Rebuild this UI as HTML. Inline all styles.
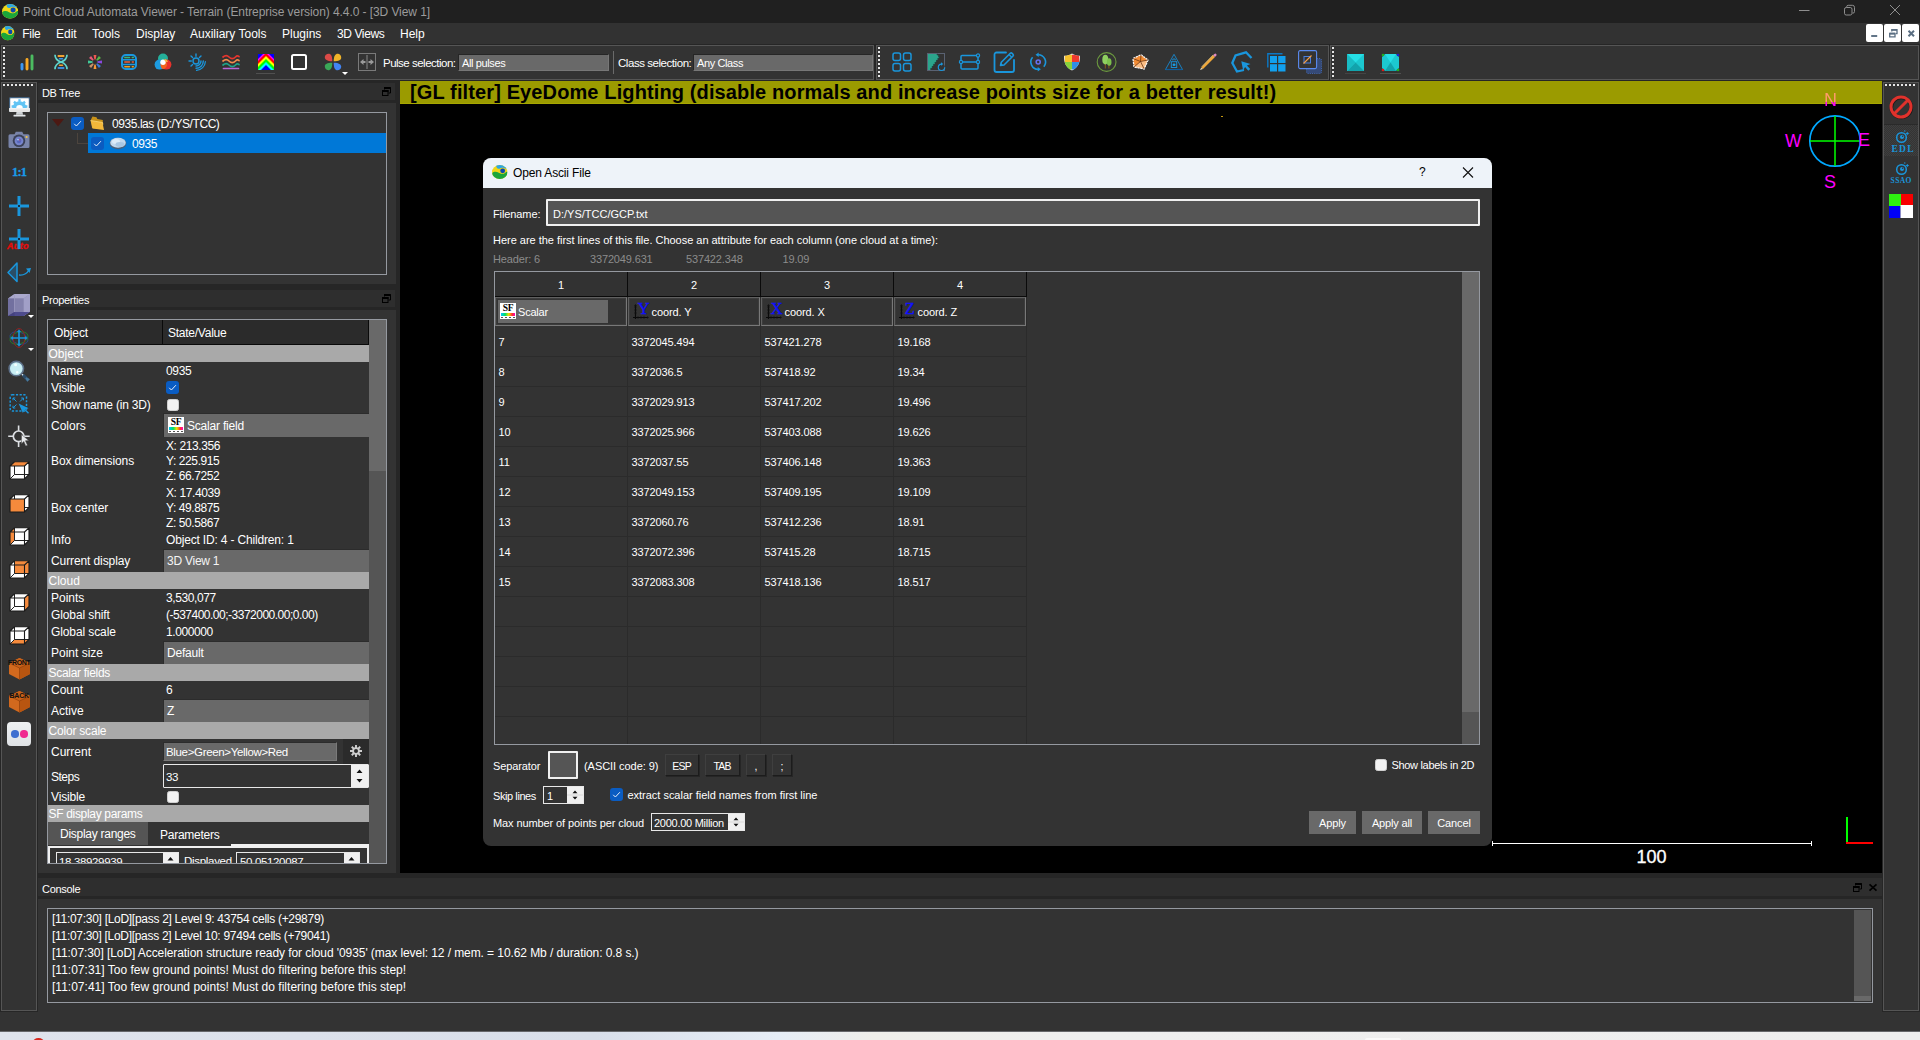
<!DOCTYPE html>
<html><head><meta charset="utf-8"><title>Point Cloud Automata Viewer</title>
<style>
*{box-sizing:border-box;margin:0;padding:0}
html,body{width:1920px;height:1040px;overflow:hidden}
body{background:#333;font-family:"Liberation Sans",sans-serif;font-size:12px;color:#fff;position:relative}
.a{position:absolute}
.t{position:absolute;white-space:pre;line-height:14px;height:14px;font-size:12px;color:#fff}
.d{position:absolute;white-space:pre;line-height:13px;height:13px;font-size:11px;color:#fff}
svg{position:absolute;overflow:visible}
.cb{position:absolute;width:13px;height:13px;border-radius:3px;background:#0a5cc2}
.cb svg{left:0;top:0}
.cbw{position:absolute;width:12px;height:12px;border-radius:2.5px;background:#f3f3f3;border:1px solid #d0d0d0}
.sec{position:absolute;left:48px;width:321px;height:17px;background:#a9a9a9}
.sec span{position:absolute;left:0.5px;top:1.5px;font-size:12px;line-height:14px;color:#fff}
.combo{position:absolute;background:#696969;border-top:1px solid #2c2c2c;border-left:1px solid #2c2c2c}
</style></head><body>
<!-- title bar -->
<div class="a" style="left:0;top:0;width:1920px;height:23px;background:#202020"></div>
<div class="t" style="left:23px;top:5px;color:#9b9b9b;letter-spacing:-0.075px">Point Cloud Automata Viewer - Terrain (Entreprise version) 4.4.0 - [3D View 1]</div>
<svg style="left:1798px;top:0px" width="110" height="22" viewBox="0 0 110 22"><g stroke="#8e8e8e" stroke-width="1" fill="none"><path d="M1 10.500h10.500"/><rect x="46.500" y="7.500" width="7.500" height="7.500" rx="1.700"/><path d="M48.700 7v-.2a1.500 1.500 0 0 1 1.500-1.500h4.200a2.100 2.100 0 0 1 2.100 2.100v4.200a1.500 1.500 0 0 1-1.500 1.500h-.5"/><path d="M92 5l10 10M102 5l-10 10"/></g></svg>
<!-- menu bar -->
<div class="a" style="left:0;top:23px;width:1920px;height:22px;background:#323232"></div>
<div class="t" style="left:22.300px;top:27px;letter-spacing:-0.300px">File</div>
<div class="t" style="left:56px;top:27px">Edit</div>
<div class="t" style="left:92px;top:27px">Tools</div>
<div class="t" style="left:136px;top:27px">Display</div>
<div class="t" style="left:190px;top:27px">Auxiliary Tools</div>
<div class="t" style="left:282px;top:27px">Plugins</div>
<div class="t" style="left:337px;top:27px;letter-spacing:-0.400px">3D Views</div>
<div class="t" style="left:400px;top:27px">Help</div>
<!-- mdi buttons -->
<div class="a" style="left:1866px;top:24px;width:17px;height:18px;background:#fff;border-radius:2px"></div>
<div class="a" style="left:1884px;top:24px;width:17px;height:18px;background:#fff;border-radius:2px"></div>
<div class="a" style="left:1902px;top:24px;width:17px;height:18px;background:#fff;border-radius:2px"></div>
<svg style="left:1866px;top:24px" width="54" height="18" viewBox="0 0 54 18"><g stroke="#5a6e82" fill="none"><path d="M5.200 12h6" stroke-width="1.900"/><path d="M23.700 9.300h5.300v3.600h-5.300z" stroke-width="1.300"/><path d="M23.700 9.700h5.300" stroke-width="1.900"/><path d="M25.800 7.500v-1.800h5.200v4h-1.200" stroke-width="1.300"/><path d="M25.800 6h5.200" stroke-width="1.600"/><path d="M42.500 6.800l5.500 5.500M48 6.800l-5.500 5.500" stroke-width="2"/></g></svg>
<!-- toolbar -->
<div class="a" style="left:0;top:44px;width:1920px;height:37px;background:#262626"></div>
<div class="a" style="left:1px;top:45px;width:873px;height:35px;border:1px solid #555;background:#333"></div>
<div class="a" style="left:876px;top:45px;width:453px;height:35px;border:1px solid #555;background:#333"></div>
<div class="a" style="left:1330px;top:45px;width:589px;height:35px;border:1px solid #555;background:#333"></div>
<!-- left toolbar -->
<div class="a" style="left:1px;top:82px;width:36px;height:929px;border:1px solid #555;background:#333;box-shadow:0 0 0 1px #262626"></div>
<!-- right toolbar -->
<div class="a" style="left:1883px;top:82px;width:36px;height:929px;border:1px solid #555;background:#333;box-shadow:0 0 0 1px #262626"></div>
<!-- DB tree dock -->
<div class="a" style="left:38px;top:81px;width:362px;height:22px;background:#262626"></div>
<div class="a" style="left:38px;top:83px;width:357px;height:17px;background:#2e2e2e"></div>
<div class="t" style="left:42px;top:86px;font-size:11px;letter-spacing:-0.350px">DB Tree</div>
<div class="a" style="left:47px;top:112px;width:340px;height:163px;border:1px solid #9599a0"></div>
<!-- Properties dock -->
<div class="a" style="left:38px;top:284px;width:358px;height:26px;background:#262626"></div>
<div class="a" style="left:38px;top:290px;width:357px;height:17px;background:#2e2e2e"></div>
<div class="t" style="left:42px;top:293px;font-size:11px;letter-spacing:-0.300px">Properties</div>
<div class="a" style="left:47px;top:319px;width:340px;height:545px;border:1px solid #9599a0"></div>
<!-- dock separators -->
<div class="a" style="left:396px;top:81px;width:4px;height:792px;background:#262626"></div>
<div class="a" style="left:38px;top:873px;width:1845px;height:26px;background:#262626"></div>
<!-- 3D view -->
<div class="a" style="left:400px;top:81px;width:1482px;height:792px;background:#000"></div>
<div class="a" style="left:400px;top:81px;width:1482px;height:23px;background:#9b9b00;border-bottom:1px solid #a7a700"></div>
<div class="a" style="left:410px;top:80.500px;font-size:20px;line-height:22px;font-weight:700;color:#000;white-space:pre;letter-spacing:0.12px">[GL filter] EyeDome Lighting (disable normals and increase points size for a better result!)</div>
<!-- console dock -->
<div class="a" style="left:38px;top:878px;width:1844px;height:18px;background:#2e2e2e"></div>
<div class="t" style="left:42px;top:882px;font-size:11px;letter-spacing:-0.300px">Console</div>
<div class="a" style="left:47px;top:908px;width:1826px;height:95px;border:1px solid #9599a0"></div>
<!-- bottom strip -->
<div class="a" style="left:0;top:1031px;width:1920px;height:1px;background:#66676a"></div>
<div class="a" style="left:0;top:1032px;width:1920px;height:8px;background:linear-gradient(90deg,#dfe3ec 0,#d9dfea 31%,#e6edf6 40.500%,#efeeea 45.500%,#efefef 57%,#eeeeee 100%)"></div>
<div class="a" style="left:33px;top:1037.500px;width:10.500px;height:8px;border-radius:50%;background:#d8281e"></div>
<div class="a" style="left:1365px;top:1038px;width:36px;height:4px;border-radius:3px;background:#fafafa"></div>
<svg style="left:2px;top:3.7px" width="16.2" height="14.8" viewBox="0 0 16 15" preserveAspectRatio="none"><clipPath id="appc1"><ellipse cx="8" cy="7.500" rx="8" ry="7.400"/></clipPath><g clip-path="url(#appc1)"><rect width="16" height="15" fill="#efd718"/><path d="M4.300 0C4.500 3 5.500 4.400 7.500 4S10 2.700 12 3.100S14.500 4.200 16 3.600V0z" fill="#2ba6e6"/><path d="M0 8.600C2 6.600 4.500 6.600 7 8.300S11.500 9.400 13 8.400S15 7.100 16 7.100V15H0z" fill="#1ba63a"/><circle cx="11" cy="6.100" r="3.200" fill="#e4cc20"/><circle cx="11" cy="6.100" r="2.500" fill="#0a48ae"/></g></svg>
<svg style="left:0.6px;top:25.8px" width="13.5" height="14.5" viewBox="0 0 16 15" preserveAspectRatio="none"><clipPath id="appc2"><ellipse cx="8" cy="7.500" rx="8" ry="7.400"/></clipPath><g clip-path="url(#appc2)"><rect width="16" height="15" fill="#efd718"/><path d="M4.300 0C4.500 3 5.500 4.400 7.500 4S10 2.700 12 3.100S14.500 4.200 16 3.600V0z" fill="#2ba6e6"/><path d="M0 8.600C2 6.600 4.500 6.600 7 8.300S11.500 9.400 13 8.400S15 7.100 16 7.100V15H0z" fill="#1ba63a"/><circle cx="11" cy="6.100" r="3.200" fill="#e4cc20"/><circle cx="11" cy="6.100" r="2.500" fill="#0a48ae"/></g></svg>
<!-- toolbar handles -->
<svg style="left:3px;top:47px" width="2" height="32"><g fill="#e6e6e6"><rect y="0" width="2" height="2"/><rect y="4" width="2" height="2"/><rect y="8" width="2" height="2"/><rect y="12" width="2" height="2"/><rect y="16" width="2" height="2"/><rect y="20" width="2" height="2"/><rect y="24" width="2" height="2"/><rect y="28" width="2" height="2"/></g></svg>
<svg style="left:878px;top:47px" width="2" height="32"><g fill="#e6e6e6"><rect y="0" width="2" height="2"/><rect y="4" width="2" height="2"/><rect y="8" width="2" height="2"/><rect y="12" width="2" height="2"/><rect y="16" width="2" height="2"/><rect y="20" width="2" height="2"/><rect y="24" width="2" height="2"/><rect y="28" width="2" height="2"/></g></svg>
<svg style="left:1332px;top:47px" width="2" height="32"><g fill="#e6e6e6"><rect y="0" width="2" height="2"/><rect y="4" width="2" height="2"/><rect y="8" width="2" height="2"/><rect y="12" width="2" height="2"/><rect y="16" width="2" height="2"/><rect y="20" width="2" height="2"/><rect y="24" width="2" height="2"/><rect y="28" width="2" height="2"/></g></svg>
<!-- T1: bar chart -->
<svg style="left:19px;top:53px" width="16" height="18" viewBox="0 0 16 18"><g stroke-linecap="round" stroke-width="2.900" fill="none"><path d="M3 11.500v4.500" stroke="#3b97f3"/><path d="M8 6.500v9.500" stroke="#f7a823"/><path d="M13 3v13" stroke="#4cbc61"/></g></svg>
<!-- T1: dna -->
<svg style="left:53px;top:54px" width="16" height="16" viewBox="0 0 16 16"><g fill="none" stroke-linecap="butt"><path d="M2 .8C2 5 4.500 6.800 8 8S14 11 14 15.200" stroke="#5fd6ce" stroke-width="1.700"/><path d="M14 .8C14 5 11.500 6.800 8 8S2 11 2 15.200" stroke="#5fd6ce" stroke-width="1.700"/><path d="M4.700 2h6.600" stroke="#f0a232" stroke-width="2"/><path d="M6.500 4.700h3" stroke="#3a9af0" stroke-width="1.500" stroke-linecap="round"/><path d="M6.500 11.300h3" stroke="#f0a232" stroke-width="1.500" stroke-linecap="round"/><path d="M4.700 14h6.600" stroke="#3a8ad8" stroke-width="2"/></g></svg>
<!-- T1: asterisk -->
<svg style="left:87px;top:54px" width="16" height="16" viewBox="-8 -8 16 16"><path d="M0.65 -2.40L1.45 -7.00L-1.45 -7.00L-0.65 -2.40z" fill="#f05a50"/><path d="M2.16 -1.24L5.98 -3.92L3.92 -5.98L1.24 -2.16z" fill="#58b848"/><path d="M2.40 0.65L7.00 1.45L7.00 -1.45L2.40 -0.65z" fill="#8a48e0"/><path d="M1.24 2.16L3.92 5.98L5.98 3.92L2.16 1.24z" fill="#3878d8"/><path d="M-0.65 2.40L-1.45 7.00L1.45 7.00L0.65 2.40z" fill="#f89838"/><path d="M-2.16 1.24L-5.98 3.92L-3.92 5.98L-1.24 2.16z" fill="#c89068"/><path d="M-2.40 -0.65L-7.00 -1.45L-7.00 1.45L-2.40 0.65z" fill="#40c898"/><path d="M-1.24 -2.16L-3.92 -5.98L-5.98 -3.92L-2.16 -1.24z" fill="#e85878"/><circle r="1.200" fill="#2e2e2e"/></svg>
<!-- T1: db -->
<svg style="left:121px;top:54px" width="16" height="16" viewBox="0 0 16 16"><rect x="1" y="1" width="14" height="14" rx="3.800" fill="none" stroke="#1a98df" stroke-width="2"/><path d="M1 5.800h14M1 10.400h14" stroke="#1a98df" stroke-width="1.500"/><g stroke-width="1.500" stroke-linecap="round"><path d="M3.800 3.500h4.700" stroke="#35b87a"/><path d="M11.300 3.500h1" stroke="#35b87a"/><path d="M3.800 8.100h4.700" stroke="#f0603a"/><path d="M11.300 8.100h1" stroke="#f0603a"/><path d="M3.800 12.700h4.700" stroke="#f2a01b"/><path d="M11.300 12.700h1" stroke="#f2a01b"/></g></svg>
<!-- T1: color circles -->
<svg style="left:154px;top:53px" width="18" height="18" viewBox="0 0 18 18"><circle cx="9" cy="5.600" r="5" fill="#24b09a"/><circle cx="5.600" cy="11.600" r="5" fill="#1d9be0"/><circle cx="12.400" cy="11.600" r="5" fill="#e8322c"/><path d="M9 7.200a5 5 0 0 1 4 3.400a5 5 0 0 1-4 5.600a5 5 0 0 1-1-8z" fill="#f2641e"/><circle cx="9" cy="9.300" r="2.700" fill="#fff"/><path d="M10.500 6.800a4 4 0 0 1 2.800 2" stroke="#f5c542" stroke-width="1.600" fill="none"/></svg>
<!-- T1: sun -->
<svg style="left:188px;top:53px" width="18" height="18" viewBox="0 0 18 18"><g fill="none" stroke="#1a96dc" stroke-width="1.400" stroke-linecap="round"><circle cx="8" cy="8" r="3"/><path d="M8 1v2.300M3 3l1.600 1.600M1 8h2.300M3 13l1.600-1.600M13 3l-1.600 1.600"/><path d="M13 8a5 5 0 0 1-5 5"/><path d="M15.300 8a7.300 7.300 0 0 1-7.300 7.300"/><path d="M17.400 8.500a9.400 9.400 0 0 1-8.900 8.900" stroke-width="1.200"/></g></svg>
<!-- T1: waves -->
<svg style="left:222px;top:54px" width="18" height="16" viewBox="0 0 18 16"><g fill="none" stroke-width="1.700" stroke-linecap="round"><path d="M1 3c2.500-2 4-2 6 0s4.500 2 6.500 0s2.500-1 3.500-.5" stroke="#e8352e"/><path d="M1 7c2.500-2 4-2 6 0s4.500 2 6.500 0s2.500-1 3.500-.5" stroke="#f58a4c"/><path d="M1 11c2.500-2 4-2 6 0s4.500 2 6.500 0s2.500-1 3.500-.5" stroke="#1fa58a"/><path d="M1.500 14.500h15" stroke="#b868d8"/></g></svg>
<!-- T1: rainbow -->
<svg style="left:258px;top:54px;overflow:hidden" width="16" height="16" viewBox="0 0 16 16"><rect width="16" height="16" fill="#ff00ff"/><path d="M0 6L8-2L16 6V16H0z" fill="#f0f"/><path d="M0 5L8-3L16 5V16H0z" fill="#ff00ff"/><path d="M0 7L8-1L16 7V16H0z" fill="#f00"/><path d="M0 10L8 2L16 10V16H0z" fill="#ff0"/><path d="M0 13L8 5L16 13V16H0z" fill="#0f0"/><path d="M0 16L8 8L16 16z" fill="#0ff"/><path d="M3 16L8 11L13 16z" fill="#00f"/><path d="M0 0h5L0 5zM16 0h-5l5 5z" fill="#00f"/></svg>
<div class="a" style="left:256px;top:73px;width:19px;height:1px;background:#505050"></div>
<!-- T1: white square -->
<div class="a" style="left:291px;top:54px;width:16px;height:16px;border:2px solid #fff;border-radius:2.500px"></div>
<!-- T1: pinwheel -->
<svg style="left:324px;top:53px" width="18" height="18" viewBox="0 0 18 18"><path d="M8.300 8.300C3 8.300 .8 6.500 .8 4.300S2.500.8 4.700.8S8.300 3 8.300 8.300z" fill="#db4a47"/><path d="M9.700 8.300C9.700 3 11.500.8 13.700.8s3.500 1.700 3.500 3.900S15 8.300 9.700 8.300z" fill="#f0b429"/><path d="M9.700 9.700c5.300 0 7.500 1.800 7.500 4s-1.700 3.500-3.900 3.500S9.700 15 9.700 9.700z" fill="#4285f4"/><path d="M8.300 9.700C8.300 15 6.500 17.200 4.300 17.200S.8 15.500.8 13.300S3 9.700 8.300 9.700z" fill="#3aa757"/></svg>
<svg style="left:342px;top:72px" width="6" height="3" viewBox="0 0 6 3"><path d="M0 0h6L3 3z" fill="#fff"/></svg>
<!-- T1: arrows box -->
<svg style="left:358px;top:53px" width="18" height="18" viewBox="0 0 18 18"><rect x=".5" y=".5" width="17" height="17" fill="none" stroke="#7a7a7a"/><path d="M9 2v14" stroke="#8a8a8a" stroke-width="1"/><path d="M2 9l3.500-3v2h2v2h-2v2zM16 9l-3.500-3v2h-2v2h2v2z" fill="#9a9a9a"/></svg>
<!-- labels & combos -->
<div class="d" style="left:383px;top:57px;font-size:11.500px;letter-spacing:-0.500px">Pulse selection:</div>
<div class="a" style="left:458px;top:54px;width:151px;height:17px;background:#696969;border-top:1px solid #262626;border-left:1px solid #262626;border-bottom:1px solid #777;border-right:1px solid #777"></div>
<div class="d" style="left:462px;top:57px;font-size:11px;letter-spacing:-0.380px">All pulses</div>
<div class="a" style="left:613px;top:51px;width:1px;height:23px;background:#6a6a6a"></div>
<div class="d" style="left:618px;top:57px;font-size:11.500px;letter-spacing:-0.450px">Class selection:</div>
<div class="a" style="left:693px;top:54px;width:180px;height:17px;background:#696969;border-top:1px solid #262626;border-left:1px solid #262626;border-bottom:1px solid #777;border-right:1px solid #777"></div>
<div class="d" style="left:697px;top:57px;font-size:11px;letter-spacing:-0.380px">Any Class</div>
<!-- T2: four squares -->
<svg style="left:892px;top:52px" width="20" height="20" viewBox="0 0 20 20"><g fill="none" stroke="#1a96dc" stroke-width="1.500"><rect x="1" y="1" width="7.500" height="7.500" rx="2"/><rect x="11.500" y="1" width="7.500" height="7.500" rx="2"/><rect x="1" y="11.500" width="7.500" height="7.500" rx="2"/><rect x="11.500" y="11.500" width="7.500" height="7.500" rx="2"/></g></svg>
<!-- T2: teal shape -->
<svg style="left:927px;top:53px" width="19" height="19" viewBox="0 0 19 19"><rect x=".5" y=".5" width="17" height="17" fill="none" stroke="#5a6272"/><path d="M1 1H10L12.300 4L3.200 17H1z" fill="#2ba58c"/><path d="M10 1L12.300 4L3.200 17" fill="none" stroke="#1d4440" stroke-width="1.300" stroke-dasharray="1.400 1.100"/><circle cx="14.500" cy="14.300" r="3.300" fill="#333"/><path d="M17.700 14.300a3.200 3.200 0 1 1-3.200-3.200" fill="none" stroke="#1a96dc" stroke-width="1.200"/><path d="M14 9.300l2.300 1.800l-2.300 1.600z" fill="#1a96dc"/></svg>
<!-- T2: two rows -->
<svg style="left:959px;top:53px" width="22" height="18" viewBox="0 0 22 18"><g fill="none" stroke="#1a96dc" stroke-width="1.500"><rect x="2" y="2.500" width="17" height="13.500" rx="1"/><path d="M2 9h17"/></g><g fill="#333" stroke="#1a96dc" stroke-width="1.200"><circle cx="19" cy="2.500" r="1.600"/><circle cx="2" cy="9" r="1.600"/><circle cx="19" cy="9" r="1.600"/></g></svg>
<!-- T2: edit -->
<svg style="left:993px;top:51px" width="23" height="22" viewBox="0 0 23 22"><path d="M13 1.500H3.500a2 2 0 0 0-2 2v15.500a2 2 0 0 0 2 2h15.500a2 2 0 0 0 2-2V9" fill="none" stroke="#1a96dc" stroke-width="1.800" stroke-linecap="round"/><path d="M7.500 14.500l.8-3.200l9-9a1.300 1.300 0 0 1 1.800 0l.9.900a1.300 1.300 0 0 1 0 1.800l-9 9z" fill="none" stroke="#1a96dc" stroke-width="1.600" stroke-linejoin="round"/><path d="M7 15l1-3l2 2z" fill="#1a96dc"/><path d="M16 3.500l2.800 2.800" stroke="#1a96dc" stroke-width="1.300"/></svg>
<!-- T2: refresh -->
<svg style="left:1029px;top:53px" width="18" height="18" viewBox="0 0 18 18"><g fill="none" stroke="#1a96dc" stroke-width="1.600"><path d="M9.200 1.700A7.300 7.300 0 0 1 14.800 13.700"/><path d="M9.200 16.300A7.300 7.300 0 0 1 3.600 4.300"/></g><path d="M9.700-.5v4.400L6.500 1.700z" fill="#1a96dc"/><path d="M8.700 14.100v4.400l3.200-2.200z" fill="#1a96dc"/><circle cx="9.200" cy="9" r="2" fill="none" stroke="#6670f0" stroke-width="1.600"/></svg>
<!-- T2: shield -->
<svg style="left:1063px;top:53px" width="18" height="18" viewBox="0 0 18 18"><defs><clipPath id="shc"><path d="M9 .5c2.500 1.800 5 2.300 8 2.300c.3 6-1.500 11.500-8 14.700C2.500 14.300.7 8.800 1 2.800c3 0 5.500-.5 8-2.300z"/></clipPath></defs><path d="M9 .5c2.500 1.800 5 2.300 8 2.300c.3 6-1.500 11.500-8 14.700C2.500 14.300.7 8.800 1 2.800c3 0 5.500-.5 8-2.300z" fill="#e8e8e8"/><g clip-path="url(#shc)"><rect x="1.800" y="1.800" width="7.200" height="7.200" fill="#f6c12b"/><rect x="9" y="1.800" width="7.200" height="7.200" fill="#ee3a2f"/><rect x="1.800" y="9" width="7.200" height="7.500" fill="#86d23c"/><rect x="9" y="9" width="7.200" height="7.500" fill="#2f8fe6"/></g></svg>
<!-- T2: tree circle -->
<svg style="left:1096px;top:51px" width="21" height="22" viewBox="0 0 21 22"><circle cx="10.600" cy="11" r="9.400" fill="none" stroke="#6c9a3f" stroke-width="1.100"/><path d="M9.300 12v5.500M12.900 14v3.500" stroke="#8a5a1a" stroke-width="1"/><ellipse cx="9.300" cy="8.600" rx="3" ry="4.800" fill="#8fd060"/><ellipse cx="13.200" cy="11" rx="2.300" ry="3.800" fill="#7cc04c"/></svg>
<!-- T2: polyhedron -->
<svg style="left:1132px;top:54px" width="17" height="17" viewBox="0 0 17 17"><path d="M9 .8L16 6L12.200 15L2 13L1 4.500z" fill="#f28c34"/><path d="M8.500 7.500L16 6L12.200 15L2 13z" fill="#fbbd84"/><path d="M9 .8L16 6L12.200 15L2 13L1 4.500z" fill="none" stroke="#f6f6f6" stroke-width="1.300" stroke-dasharray="2.200 .7"/><path d="M9 .8L8.500 7.500L16 6M8.500 7.500L12.200 15M8.500 7.500L2 13M8.500 7.500L1 4.500" stroke="#5a2808" stroke-width=".7" fill="none"/></svg>
<!-- T2: triangle -->
<svg style="left:1164px;top:53px" width="20" height="18" viewBox="0 0 20 18"><path d="M10 1.300L18.500 16.500H1.500z" fill="none" stroke="#1a80c0" stroke-width="1"/><path d="M1.500 16.500h17" stroke="#0e5c9c" stroke-width="1.200"/><rect x="7.300" y="8.700" width="5.400" height="5.800" fill="none" stroke="#1a8ed2" stroke-width="1"/><ellipse cx="10" cy="11.800" rx="1.500" ry="1.300" fill="#1aa0e8"/><path d="M8.800 7.500v-1.500h2.400v1.500" fill="none" stroke="#1a8ed2" stroke-width=".9"/></svg>
<!-- T2: pencil -->
<svg style="left:1199px;top:52px" width="18" height="18" viewBox="0 0 18 18"><path d="M2.200 15.800L14.200 3.300l1.800 1.800L4 17z" fill="#f2a838"/><path d="M2.800 14.800L14.500 2.800" stroke="#f9cf7a" stroke-width="1"/><path d="M14.200 3.300l1.200-1.300a1.200 1.200 0 0 1 1.800 1.800l-1.200 1.300z" fill="#e08ac0"/><path d="M2.200 15.800L1 18l3-1z" fill="#e8d8b8"/></svg>
<!-- T2: polygon cursor -->
<svg style="left:1231px;top:51px" width="22" height="22" viewBox="0 0 22 22"><path d="M20.500 7L15 1.300L4.500 4.500L1.300 12L6 20.500L13 19" fill="none" stroke="#1a96dc" stroke-width="2.300" stroke-linejoin="miter"/><path d="M10.300 10.200l9.200 2.800l-3.600 1.500l3.300 3.600l-1.900 1.600l-3.200-3.700l-2 3.200z" fill="#1a96dc"/></svg>
<!-- T2: windows -->
<svg style="left:1267px;top:53px" width="19" height="19" viewBox="0 0 19 19"><path d="M.8 14.500V.8H15.500" fill="none" stroke="#0c78c4" stroke-width="1.400"/><g fill="#12a0ee"><rect x="3" y="3" width="7" height="7"/><rect x="11.200" y="3" width="7.300" height="7"/><rect x="3" y="11.200" width="7" height="7.300"/><rect x="11.200" y="11.200" width="7.300" height="7.300"/></g></svg>
<!-- T2: overlap squares -->
<svg style="left:1298px;top:50px" width="24" height="24" viewBox="0 0 24 24"><rect x="8.500" y="8.500" width="15" height="15" rx="1.500" fill="#354a78" stroke="#4468b0" stroke-dasharray="1 1.200"/><rect x=".6" y=".6" width="18" height="18" rx="1.500" fill="#333" stroke="#5a8af0" stroke-width="1.100"/><rect x="6" y="6.500" width="6.500" height="6.500" fill="none" stroke="#4a7fe0" stroke-width="1"/><path d="M5.500 13.500L13.500 5.500" stroke="#f5a04c" stroke-width="1.100"/></svg>
<!-- T3: cyan square -->
<svg style="left:1347px;top:54px" width="17" height="17" viewBox="0 0 17 17"><rect width="17" height="17" fill="#1cc8d0"/><path d="M0 0L8.500 8.500L17 0z" fill="#25dfe6"/><path d="M0 17L8.500 8.500L17 17z" fill="#12a3ac"/><path d="M0 0L8.500 8.500L0 17z" fill="#19bcc4"/></svg>
<div class="a" style="left:1345px;top:73px;width:21px;height:1px;background:#444"></div>
<!-- T3: cyan octagon -->
<svg style="left:1381px;top:53px" width="19" height="19" viewBox="0 0 19 19"><path d="M4 1h11l3 3v11l-3 3H4l-3-3V4z" fill="#1cc8d0"/><path d="M4 1h11L9.500 9.500z" fill="#25dfe6"/><path d="M4 18h11L9.500 9.500z" fill="#12a3ac"/><circle cx="2" cy="2" r="1.300" fill="#1fb020"/><circle cx="17" cy="2" r="1.300" fill="#1a20d0"/><circle cx="2" cy="17" r="1.300" fill="#e01a1a"/><circle cx="17" cy="17" r="1.300" fill="#1fb020"/></svg>
<div class="a" style="left:1380px;top:73px;width:21px;height:1px;background:#505050"></div>
<!-- left toolbar handle -->
<svg style="left:3px;top:84px" width="32" height="2"><g fill="#e6e6e6"><rect x="0" width="2" height="2"/><rect x="4" width="2" height="2"/><rect x="8" width="2" height="2"/><rect x="12" width="2" height="2"/><rect x="16" width="2" height="2"/><rect x="20" width="2" height="2"/><rect x="24" width="2" height="2"/><rect x="28" width="2" height="2"/></g></svg>
<svg style="left:1885px;top:84px" width="32" height="2"><g fill="#e6e6e6"><rect x="0" width="2" height="2"/><rect x="4" width="2" height="2"/><rect x="8" width="2" height="2"/><rect x="12" width="2" height="2"/><rect x="16" width="2" height="2"/><rect x="20" width="2" height="2"/><rect x="24" width="2" height="2"/><rect x="28" width="2" height="2"/></g></svg>
<!-- L1 monitor -->
<svg style="left:9px;top:97px" width="21" height="20" viewBox="0 0 21 20"><rect x=".6" y=".6" width="19.800" height="13.800" rx="1" fill="#fff" stroke="#42607e" stroke-width="1.200"/><path d="M3.500 11.300a7 7 0 0 1 14 0z" fill="#62c4f4"/><path d="M10.500 2.300v2.500M5 4.600l1.800 1.800M16 4.600l-1.800 1.800M2.600 9.500h2.500M18.400 9.500h-2.500" stroke="#62c4f4" stroke-width="2.300"/><path d="M7.200 11.300a3.300 3.300 0 0 1 6.600 0z" fill="#fff"/><rect x="0" y="11.300" width="21" height="3.700" rx="1" fill="#e4e4e4"/><path d="M0 11.800h21" stroke="#f8f8f8" stroke-width="1"/><path d="M7.500 15h6l.5 2.800h-7z" fill="#cfd3d6"/><rect x="4.500" y="17.800" width="12" height="1.700" rx=".5" fill="#e2e5e8"/></svg>
<!-- L2 camera -->
<svg style="left:8px;top:131px" width="22" height="18" viewBox="0 0 22 18"><path d="M6.500 3.300l1.300-2.500h6.400L15.500 3.300H20a1.500 1.500 0 0 1 1.500 1.500v10.700A1.500 1.500 0 0 1 20 17H2a1.500 1.500 0 0 1-1.500-1.500V4.800A1.500 1.500 0 0 1 2 3.300z" fill="#7984a9"/><circle cx="11" cy="9.800" r="6.300" fill="#3b4157"/><circle cx="11" cy="9.800" r="4.400" fill="#7684cc"/><circle cx="11" cy="9.800" r="2.400" fill="#5866bc"/><circle cx="10" cy="8.600" r=".9" fill="#a9d4f8"/><circle cx="11.700" cy="8.900" r=".6" fill="#e05070"/><circle cx="18.600" cy="6" r="1.100" fill="#f5c542"/></svg>
<!-- L3 1:1 -->
<div class="a" style="left:11px;top:165px;width:17px;text-align:center;font-family:'Liberation Serif',serif;font-weight:700;font-size:12.500px;line-height:14px;color:#1a9ae8;letter-spacing:-0.900px;text-indent:-0.900px;-webkit-text-stroke:0.300px #1a9ae8">1:1</div>
<!-- L4 plus -->
<svg style="left:9px;top:196px" width="20" height="20" viewBox="0 0 20 20"><path d="M10 0v20M0 10h20" stroke="#1a96dc" stroke-width="3"/><rect x="9" y="9" width="2" height="2" fill="#1a3040"/></svg>
<!-- L5 plus auto -->
<div class="a" style="left:7px;top:241px;font-size:9px;line-height:10px;font-weight:700;font-style:italic;color:#e80c0c;letter-spacing:0.350px;-webkit-text-stroke:0.350px #e80c0c;white-space:pre">Auto</div>
<svg style="left:9px;top:229px" width="20" height="20" viewBox="0 0 20 20"><path d="M10 0v20M0 10h20" stroke="#1a96dc" stroke-width="3"/><rect x="9" y="9" width="2" height="2" fill="#1a3040"/></svg>
<!-- L6 triangle arrow -->
<svg style="left:7px;top:261.700px" width="25" height="21" viewBox="0 0 25 21"><path d="M10 1L1 10.500L10 19.500z" fill="#2a4e66" stroke="#1a96dc" stroke-width="1.500" stroke-linejoin="round"/><path d="M12 13c4 .5 8-1.500 10-5" fill="none" stroke="#1a96dc" stroke-width="1.400"/><path d="M19 6.500l5-.500l-1.500 5z" fill="#1a96dc"/></svg>
<!-- L7 cube -->
<svg style="left:8px;top:294px" width="22" height="22" viewBox="0 0 22 22"><path d="M0 4.500L6.500 0H22V17.500L15.500 22H0z" fill="#8886b0"/><path d="M0 4.500L6.500 0H22L15.500 4.500z" fill="#aaa8cc"/><path d="M15.500 4.500L22 0V17.500L15.500 22z" fill="#a19fc7"/><path d="M0 4.500H6.500V22H0z" fill="#72709f"/><path d="M6.500 4.500H15.500V22H6.500z" fill="#8482ad"/><path d="M0 22L6.500 18H22L15.500 22z" fill="#4d4b8c"/><path d="M0 22L6.500 18V22z" fill="#45437f"/><path d="M6.500 0V18" stroke="#9d9bc2" stroke-width=".7" fill="none"/></svg>
<svg style="left:28px;top:315px" width="6" height="3" viewBox="0 0 6 3"><path d="M0 0h6L3 3z" fill="#fff"/></svg>
<!-- L8 move -->
<svg style="left:9px;top:328px" width="20" height="20" viewBox="0 0 20 20"><ellipse cx="10" cy="10" rx="9.300" ry="5.800" fill="none" stroke="#274a86" stroke-width=".9" transform="rotate(18 10 10)"/><ellipse cx="10" cy="10" rx="9.300" ry="5.800" fill="none" stroke="#257a2a" stroke-width=".9" transform="rotate(-18 10 10)"/><ellipse cx="10" cy="10" rx="5.800" ry="9.500" fill="none" stroke="#962020" stroke-width=".9"/><path d="M10 3v14M3 10h14" stroke="#1a96dc" stroke-width="1.700"/><path d="M10 1.200l2 2.800h-4zM10 18.800l2-2.800h-4zM1.200 10l2.800-2v4zM18.800 10l-2.800-2v4z" fill="#1a96dc"/></svg>
<svg style="left:28px;top:348px" width="6" height="3" viewBox="0 0 6 3"><path d="M0 0h6L3 3z" fill="#fff"/></svg>
<!-- L9 magnifier -->
<svg style="left:8px;top:360px" width="23" height="23" viewBox="0 0 23 23"><path d="M14 14.300L16.200 13.900L21.800 19.300L19.300 21.800L13.900 16.200z" fill="#2c4a66"/><path d="M18.300 17.300l3.500 2l-2.500 2.500l-2-3.500z" fill="#4a7a9c"/><circle cx="8.300" cy="8.600" r="7.200" fill="#bde6ee" stroke="#5d7089" stroke-width="1.600"/><circle cx="8.300" cy="8.600" r="5.600" fill="#c9eef4"/><circle cx="7.600" cy="4.800" r="1.500" fill="#f4ffff"/><circle cx="9.200" cy="12.300" r="1.200" fill="#f4ffff"/><circle cx="14.500" cy="14.700" r=".8" fill="#e8f4f8"/></svg>
<!-- L10 dashed select -->
<svg style="left:9px;top:394px" width="21" height="20" viewBox="0 0 21 20"><rect x="1.200" y=".8" width="16.300" height="16.300" rx="2" fill="none" stroke="#1a96dc" stroke-width="1.500" stroke-dasharray="2.200 1.500"/><path d="M7.500 7.500L4 4M4 6.300V4H6.300M11 7.500L14.500 4M12.200 4h2.300v2.300M7.500 10.500L4 14M4 11.700V14h2.300" stroke="#1a96dc" stroke-width="1" fill="none"/><path d="M9.600 9.400l10 4.800l-3.300.8l3.700 3.700l-1 1l-3.700-3.700l-1.400 3.100z" fill="#1a96dc"/></svg>
<!-- L11 crosshair -->
<svg style="left:8px;top:425px" width="23" height="23" viewBox="0 0 23 23"><circle cx="10.600" cy="11.300" r="5.300" fill="none" stroke="#dcdfe3" stroke-width="1.700"/><path d="M10.600 .5v5.500M10.600 16.600v5.300M.2 11.300h5.100M15.900 11.300h5.800" stroke="#dcdfe3" stroke-width="1.600"/><path d="M13.500 9.500l7.200 6l-3.300.2l2 4.500l-1.600.7l-2-4.500l-2.300 2.300z" fill="#e9ebee" stroke="#4a4a4a" stroke-width=".5"/></svg>
<!-- L12-17 cubes -->
<svg style="left:9px;top:461px" width="21" height="19" viewBox="0 0 21 19"><path d="M1 5L5.5 0.8H20V13.5L15.5 18H1z" fill="#fff"/><path d="M5.5 0.8V13.5H20M5.5 13.5L1 18" fill="none" stroke="#222" stroke-width="1"/><path d="M1 5L5.5 0.8H20L15.5 5z" fill="#f58a3c"/><path d="M1 5H15.5V18H1zM1 5L5.5 0.8H20V13.5L15.5 18M15.5 5L20 0.8" fill="none" stroke="#1a1a1a" stroke-width="1.100"/></svg>
<svg style="left:9px;top:494px" width="21" height="19" viewBox="0 0 21 19"><path d="M1 5L5.5 0.8H20V13.5L15.5 18H1z" fill="#fff"/><path d="M5.5 0.8V13.5H20M5.5 13.5L1 18" fill="none" stroke="#222" stroke-width="1"/><path d="M1 5H15.5V18H1z" fill="#f58a3c"/><path d="M1 5H15.5V18H1zM1 5L5.5 0.8H20V13.5L15.5 18M15.5 5L20 0.8" fill="none" stroke="#1a1a1a" stroke-width="1.100"/></svg>
<svg style="left:9px;top:527px" width="21" height="19" viewBox="0 0 21 19"><path d="M1 5L5.5 0.8H20V13.5L15.5 18H1z" fill="#fff"/><path d="M1 5L5.5 0.8V13.5L1 18z" fill="#f58a3c"/><path d="M5.5 0.8V13.5H20M5.5 13.5L1 18" fill="none" stroke="#222" stroke-width="1"/><path d="M1 5H15.5V18H1zM1 5L5.5 0.8H20V13.5L15.5 18M15.5 5L20 0.8" fill="none" stroke="#1a1a1a" stroke-width="1.100"/></svg>
<svg style="left:9px;top:560px" width="21" height="19" viewBox="0 0 21 19"><path d="M1 5L5.5 0.8H20V13.5L15.5 18H1z" fill="#fff"/><path d="M5.5 0.8H20V13.5H5.5z" fill="#f58a3c"/><path d="M5.5 0.8V13.5H20M5.5 13.5L1 18" fill="none" stroke="#222" stroke-width="1"/><path d="M1 5H15.5V18H1zM1 5L5.5 0.8H20V13.5L15.5 18M15.5 5L20 0.8" fill="none" stroke="#1a1a1a" stroke-width="1.100"/></svg>
<svg style="left:9px;top:593px" width="21" height="19" viewBox="0 0 21 19"><path d="M1 5L5.5 0.8H20V13.5L15.5 18H1z" fill="#fff"/><path d="M5.5 0.8V13.5H20M5.5 13.5L1 18" fill="none" stroke="#222" stroke-width="1"/><path d="M15.5 5L20 0.8V13.5L15.5 18z" fill="#f58a3c"/><path d="M1 5H15.5V18H1zM1 5L5.5 0.8H20V13.5L15.5 18M15.5 5L20 0.8" fill="none" stroke="#1a1a1a" stroke-width="1.100"/></svg>
<svg style="left:9px;top:626px" width="21" height="19" viewBox="0 0 21 19"><path d="M1 5L5.5 0.8H20V13.5L15.5 18H1z" fill="#fff"/><path d="M1 18L5.5 13.5H20L15.5 18z" fill="#f58a3c"/><path d="M5.5 0.8V13.5H20M5.5 13.5L1 18" fill="none" stroke="#222" stroke-width="1"/><path d="M1 5H15.5V18H1zM1 5L5.5 0.8H20V13.5L15.5 18M15.5 5L20 0.8" fill="none" stroke="#1a1a1a" stroke-width="1.100"/></svg>
<!-- L18 FRONT -->
<svg style="left:8px;top:657px" width="23" height="23" viewBox="0 0 23 23"><path d="M11.500 1L22 6v11l-10.500 5.500L1 17V6z" fill="#d2691e"/><path d="M11.500 1L22 6l-10.500 5L1 6z" fill="#c86018"/><path d="M11.500 11V22.500L22 17V6z" fill="#b85510"/><path d="M11.500 11V22.500M1 6l10.500 5L22 6" stroke="#8a3a08" stroke-width=".6" fill="none"/></svg>
<div class="a" style="left:8px;top:659px;font-size:7px;line-height:8px;font-weight:700;color:#111;letter-spacing:-0.350px;white-space:pre">FRONT</div>
<!-- L19 BACK -->
<svg style="left:8px;top:690px" width="23" height="23" viewBox="0 0 23 23"><path d="M11.500 1L22 6v11l-10.500 5.500L1 17V6z" fill="#d2691e"/><path d="M11.500 1L22 6l-10.500 5L1 6z" fill="#c86018"/><path d="M11.500 11V22.500L22 17V6z" fill="#b85510"/><path d="M11.500 11V22.500M1 6l10.500 5L22 6" stroke="#8a3a08" stroke-width=".6" fill="none"/></svg>
<div class="a" style="left:9.500px;top:692px;font-size:7px;line-height:8px;font-weight:700;color:#111;letter-spacing:-0.200px;white-space:pre">BACK</div>
<!-- L20 flickr -->
<div class="a" style="left:7px;top:722px;width:24px;height:24px;border-radius:4px;background:linear-gradient(#eef0f2,#dfe2e5)"></div>
<div class="a" style="left:11px;top:730px;width:7.500px;height:7.500px;border-radius:50%;background:#3f6fd0"></div>
<div class="a" style="left:20px;top:730px;width:7.500px;height:7.500px;border-radius:50%;background:#f02a90"></div>
<!-- R1 no entry -->
<svg style="left:1889px;top:95px" width="24" height="24" viewBox="0 0 24 24"><circle cx="12.300" cy="12.500" r="10" fill="none" stroke="#1a1a1a" stroke-width="3.600"/><circle cx="12" cy="12" r="10" fill="none" stroke="#e0322c" stroke-width="3"/><path d="M5 19L19 5" stroke="#e0322c" stroke-width="3"/></svg>
<!-- R2 EDL -->
<div class="a" style="left:1884px;top:124px;width:34px;height:32px;background:repeating-conic-gradient(#3f3f3f 0 25%,#343434 0 50%) 0 0/2px 2px;border-top:1px solid #2a2a2a"></div>
<svg style="left:1895.300px;top:129px" width="16" height="14" viewBox="0 0 16 14"><circle cx="6.500" cy="8.500" r="4.800" fill="none" stroke="#1a96dc" stroke-width="1.500"/><circle cx="7" cy="8" r="2" fill="#1a96dc"/><circle cx="7.600" cy="7.300" r=".7" fill="#333"/><circle cx="9.800" cy="2" r=".7" fill="#1a96dc"/><path d="M12.300 3v3M10.800 4.500h3" stroke="#1a96dc" stroke-width=".9"/></svg>
<div class="a" style="left:1886px;top:144px;width:33px;text-align:center;font-family:'Liberation Serif',serif;font-weight:700;font-size:9.500px;line-height:10px;color:#1a96dc;letter-spacing:1.300px;text-indent:1.300px">EDL</div>
<!-- R3 SSAO -->
<svg style="left:1895.300px;top:161px" width="16" height="14" viewBox="0 0 16 14"><circle cx="6.500" cy="8.500" r="4.800" fill="none" stroke="#1a96dc" stroke-width="1.500"/><circle cx="7" cy="8" r="2" fill="#1a96dc"/><circle cx="7.600" cy="7.300" r=".7" fill="#333"/><circle cx="9.800" cy="2" r=".7" fill="#1a96dc"/><path d="M12.300 3v3M10.800 4.500h3" stroke="#1a96dc" stroke-width=".9"/></svg>
<div class="a" style="left:1884.500px;top:177px;width:33px;text-align:center;font-family:'Liberation Serif',serif;font-weight:700;font-size:7.500px;line-height:8px;color:#1a96dc;letter-spacing:0.450px;text-indent:0.450px">SSAO</div>
<!-- R4 colors -->
<svg style="left:1889px;top:194px" width="24" height="24" viewBox="0 0 24 24"><rect width="12" height="12" fill="#2ef010"/><rect x="12" width="12" height="11" fill="#f80000"/><rect y="12" width="11.500" height="12" fill="#0000f8"/><rect x="11.500" y="11" width="12.500" height="13" fill="#fff"/></svg>
<!-- dock float buttons -->
<svg style="left:382px;top:87px" width="9" height="9" viewBox="0 0 9 9"><g fill="none" stroke="#000" stroke-width="1"><path d="M2.500 2.500V.5h6v5.500H6.500"/><path d="M2 1h6.500" stroke-width="2"/><rect x=".5" y="3.500" width="5.500" height="5"/><path d="M0 4h6.500" stroke-width="2"/></g></svg>
<svg style="left:382px;top:294px" width="9" height="9" viewBox="0 0 9 9"><g fill="none" stroke="#000" stroke-width="1"><path d="M2.500 2.500V.5h6v5.500H6.500"/><path d="M2 1h6.500" stroke-width="2"/><rect x=".5" y="3.500" width="5.500" height="5"/><path d="M0 4h6.500" stroke-width="2"/></g></svg>
<!-- tree rows -->
<svg style="left:52px;top:119px" width="12" height="8" viewBox="0 0 12 8"><path d="M0 0h12L6 7.500z" fill="#4c1913"/></svg>
<div class="cb" style="left:71px;top:117px"><svg width="13" height="13" viewBox="0 0 13 13"><path d="M3.200 6.800l2.200 2.200l4.500-4.800" fill="none" stroke="#e6eefb" stroke-width="1"/></svg></div>
<svg style="left:90px;top:115px" width="15" height="16" viewBox="0 0 15 16"><path d="M1 4.500L2.500 1.500l4 .8l.8 1.700l5.500 1V14L2 13z" fill="#c8921a"/><path d="M.5 5.500l12 2l1.500 7.500L2.500 13.500z" fill="#f2b83a"/><path d="M.5 5.500l12 2l.4 2" fill="none" stroke="#f9d679" stroke-width=".8"/></svg>
<div class="t" style="left:112px;top:117px;letter-spacing:-0.430px">0935.las (D:/YS/TCC)</div>
<div class="a" style="left:88px;top:133px;width:298px;height:20px;background:#0078d7"></div>
<div class="a" style="left:77px;top:133px;width:1px;height:10px;background:#4c443d"></div>
<div class="a" style="left:77px;top:143px;width:11px;height:1px;background:#4c443d"></div>
<div class="cb" style="left:91px;top:137px;background:#0b5bc0"><svg width="13" height="13" viewBox="0 0 13 13"><path d="M3.200 6.800l2.200 2.200l4.500-4.800" fill="none" stroke="#e6eefb" stroke-width="1"/></svg></div>
<svg style="left:109px;top:136px" width="18" height="14" viewBox="0 0 18 14"><ellipse cx="9" cy="7.500" rx="8.400" ry="5.700" fill="#4a607a"/><ellipse cx="9" cy="6.800" rx="7.800" ry="5" fill="#c3d9ee"/><ellipse cx="7" cy="5.500" rx="4" ry="2.500" fill="#dcebf8"/><ellipse cx="11" cy="8.500" rx="4.500" ry="2.400" fill="#a9c7e3"/></svg>
<div class="t" style="left:132px;top:137px;letter-spacing:-0.450px">0935</div>
<!-- properties header -->
<div class="a" style="left:48px;top:320px;width:321px;height:25px;background:#2b2b2b;border-bottom:1px solid #0a0a0a"></div>
<div class="a" style="left:162px;top:320px;width:1px;height:24px;background:#0a0a0a"></div>
<div class="a" style="left:368px;top:320px;width:1px;height:24px;background:#0a0a0a"></div>
<div class="t" style="left:54px;top:326px;letter-spacing:-0.100px">Object</div>
<div class="t" style="left:168px;top:326px;letter-spacing:-0.250px">State/Value</div>
<!-- scrollbar -->
<div class="a" style="left:369px;top:320px;width:17px;height:543px;background:#555"></div>
<div class="a" style="left:369px;top:320px;width:17px;height:151px;background:#696969"></div>
<!-- sections -->
<div class="sec" style="top:345px"><span>Object</span></div>
<div class="sec" style="top:572px"><span>Cloud</span></div>
<div class="sec" style="top:664px"><span style="letter-spacing:-0.300px">Scalar fields</span></div>
<div class="sec" style="top:722px"><span style="letter-spacing:-0.200px">Color scale</span></div>
<div class="sec" style="top:805px"><span style="letter-spacing:-0.320px">SF display params</span></div>
<!-- rows left labels -->
<div class="t" style="left:51px;top:364px">Name</div>
<div class="t" style="left:51px;top:381px;letter-spacing:-0.150px">Visible</div>
<div class="t" style="left:51px;top:398px;letter-spacing:-0.180px">Show name (in 3D)</div>
<div class="t" style="left:51px;top:419px">Colors</div>
<div class="t" style="left:51px;top:454px;letter-spacing:-0.120px">Box dimensions</div>
<div class="t" style="left:51px;top:501px">Box center</div>
<div class="t" style="left:51px;top:533px">Info</div>
<div class="t" style="left:51px;top:554px;letter-spacing:-0.100px">Current display</div>
<div class="t" style="left:51px;top:591px">Points</div>
<div class="t" style="left:51px;top:608px;letter-spacing:-0.100px">Global shift</div>
<div class="t" style="left:51px;top:625px;letter-spacing:-0.100px">Global scale</div>
<div class="t" style="left:51px;top:646px">Point size</div>
<div class="t" style="left:51px;top:683px">Count</div>
<div class="t" style="left:51px;top:704px">Active</div>
<div class="t" style="left:51px;top:745px">Current</div>
<div class="t" style="left:51px;top:770px;letter-spacing:-0.500px">Steps</div>
<div class="t" style="left:51px;top:790px;letter-spacing:-0.150px">Visible</div>
<!-- values -->
<div class="t" style="left:166px;top:364px;letter-spacing:-0.350px">0935</div>
<div class="cb" style="left:166px;top:381px"><svg width="13" height="13" viewBox="0 0 13 13"><path d="M3.200 6.800l2.200 2.200l4.500-4.800" fill="none" stroke="#e6eefb" stroke-width="1"/></svg></div>
<div class="cbw" style="left:166.500px;top:399px"></div>
<div class="combo" style="left:163px;top:413px;width:206px;height:24px"></div>
<div class="a" style="left:168px;top:417px;width:16px;height:16px;background:#fff"></div>
<div class="a" style="left:168px;top:416.500px;width:16px;text-align:center;font-family:'Liberation Serif',serif;font-weight:700;font-size:9.500px;line-height:10px;color:#000;letter-spacing:-0.200px">SF</div>
<div class="a" style="left:169px;top:427px;width:14px;height:3px;background:linear-gradient(90deg,#00c8ff,#00e060 30%,#f0e000 55%,#ff3030 80%,#ff00c0)"></div>
<div class="a" style="left:169px;top:431px;width:14px;height:1px;background:repeating-linear-gradient(90deg,#555 0 2px,#fff 2px 4px)"></div>
<div class="t" style="left:187px;top:419px;letter-spacing:-0.200px">Scalar field</div>
<div class="t" style="left:166px;top:439px;letter-spacing:-0.400px">X: 213.356</div>
<div class="t" style="left:166px;top:454px;letter-spacing:-0.400px">Y: 225.915</div>
<div class="t" style="left:166px;top:469px;letter-spacing:-0.400px">Z: 66.7252</div>
<div class="t" style="left:166px;top:486px;letter-spacing:-0.400px">X: 17.4039</div>
<div class="t" style="left:166px;top:501px;letter-spacing:-0.400px">Y: 49.8875</div>
<div class="t" style="left:166px;top:516px;letter-spacing:-0.400px">Z: 50.5867</div>
<div class="t" style="left:166px;top:533px;letter-spacing:-0.170px">Object ID: 4 - Children: 1</div>
<div class="combo" style="left:163px;top:549px;width:206px;height:23px"></div>
<div class="t" style="left:167px;top:554px;letter-spacing:-0.250px;color:#f4f4f4">3D View 1</div>
<div class="t" style="left:166px;top:591px;letter-spacing:-0.400px">3,530,077</div>
<div class="t" style="left:166px;top:608px;letter-spacing:-0.500px">(-537400.00;-3372000.00;0.00)</div>
<div class="t" style="left:166px;top:625px;letter-spacing:-0.400px">1.000000</div>
<div class="combo" style="left:163px;top:641px;width:206px;height:23px"></div>
<div class="t" style="left:167px;top:646px;letter-spacing:-0.200px">Default</div>
<div class="t" style="left:166px;top:683px">6</div>
<div class="combo" style="left:163px;top:699px;width:206px;height:23px"></div>
<div class="t" style="left:167px;top:704px">Z</div>
<div class="combo" style="left:163px;top:742px;width:174px;height:19px;border-bottom:1px solid #7a7a7a;border-right:1px solid #7a7a7a"></div>
<div class="d" style="left:166px;top:745.500px;font-size:11.500px;letter-spacing:-0.340px">Blue&gt;Green&gt;Yellow&gt;Red</div>
<div class="a" style="left:343px;top:739px;width:26px;height:25px;background:#2b2b2b"></div>
<svg style="left:349px;top:744px" width="14" height="14" viewBox="-7 -7 14 14"><g stroke="#cfcfcf" stroke-width="1.900" stroke-linecap="butt"><path d="M0-6V6M-6 0H6M-4.250-4.250L4.250 4.250M-4.250 4.250L4.250-4.250"/></g><circle r="3.800" fill="#cfcfcf"/><circle r="2" fill="#2b2b2b"/></svg>
<div class="a" style="left:163px;top:764px;width:206px;height:24px;border:1px solid #e8e8e8;background:#333;border-radius:1px"></div>
<div class="d" style="left:166px;top:770.500px;font-size:11.500px;letter-spacing:-0.300px">33</div>
<div class="a" style="left:351px;top:765px;width:17px;height:22px;background:#f0f0f0"></div>
<svg style="left:351px;top:765px" width="17" height="22" viewBox="0 0 17 22"><path d="M5.500 8h6L8.500 4.500zM5.500 14h6L8.500 17.500z" fill="#111"/></svg>
<div class="cbw" style="left:166.500px;top:791px"></div>
<!-- tabs -->
<div class="a" style="left:48px;top:822px;width:100px;height:23px;background:#555"></div>
<div class="t" style="left:60px;top:827px;letter-spacing:-0.270px">Display ranges</div>
<div class="t" style="left:160px;top:828px;letter-spacing:-0.250px">Parameters</div>
<div class="a" style="left:231px;top:844px;width:138px;height:2px;background:#f0f0f0"></div>
<div class="a" style="left:48px;top:846px;width:321px;height:17px;border:2px solid #f0f0f0;border-bottom:none;background:#333"></div>
<div class="a" style="left:56px;top:852px;width:123px;height:11px;border:1px solid #e8e8e8;border-bottom:none"></div>
<div class="a" style="left:163px;top:853px;width:15px;height:10px;background:#f0f0f0"></div>
<svg style="left:163px;top:853px" width="15" height="10" viewBox="0 0 15 10"><path d="M4.500 7.500h6L7.500 4z" fill="#111"/></svg>
<div class="a" style="left:48px;top:856px;width:321px;height:7px;overflow:hidden"><div class="d" style="left:11px;top:0;font-size:11.500px;letter-spacing:-0.350px">18.38929939</div><div class="d" style="left:136px;top:-1px;font-size:11.500px;letter-spacing:-0.300px">Displayed</div><div class="d" style="left:192px;top:0;font-size:11.500px;letter-spacing:-0.350px">50.05120087</div></div>
<div class="a" style="left:236px;top:852px;width:124px;height:11px;border:1px solid #e8e8e8;border-bottom:none"></div>
<div class="a" style="left:344px;top:853px;width:15px;height:10px;background:#f0f0f0"></div>
<svg style="left:344px;top:853px" width="15" height="10" viewBox="0 0 15 10"><path d="M4.500 7.500h6L7.500 4z" fill="#111"/></svg>
<!-- compass -->
<svg style="left:1780px;top:88px" width="100" height="110" viewBox="0 0 100 110"><circle cx="55" cy="53" r="25.200" fill="none" stroke="#00a8ff" stroke-width="1.700"/><path d="M55 28V78M30 53H80" stroke="#00ff00" stroke-width="1.500"/></svg>
<div class="a" style="left:1824px;top:91px;font-size:18px;line-height:18px;color:#ff90b0;white-space:pre"><span style="background:linear-gradient(#ff9a6a 0 62%,#ff00ff 62%);-webkit-background-clip:text;background-clip:text;color:transparent">N</span></div>
<div class="a" style="left:1785px;top:132px;font-size:17.500px;line-height:18px;color:#ff00ff">W</div>
<div class="a" style="left:1858px;top:131px;font-size:18px;line-height:18px;color:#ff00ff">E</div>
<div class="a" style="left:1824px;top:172.500px;font-size:18px;line-height:18px;color:#ff00ff">S</div>
<!-- scale -->
<div class="a" style="left:1492px;top:843px;width:320px;height:1px;background:#fff"></div>
<div class="a" style="left:1492px;top:841px;width:1px;height:5px;background:#fff"></div>
<div class="a" style="left:1811px;top:841px;width:1px;height:5px;background:#fff"></div>
<div class="a" style="left:1601.500px;top:847px;width:100px;text-align:center;font-size:18px;line-height:20px;color:#fff;-webkit-text-stroke:0.300px #fff">100</div>
<!-- axes -->
<div class="a" style="left:1846px;top:817px;width:1.500px;height:26px;background:#00ff00"></div>
<div class="a" style="left:1846px;top:842px;width:27px;height:1.500px;background:#ff0000"></div>
<div class="a" style="left:1221px;top:116px;width:2px;height:1px;background:#c89a10"></div>
<svg style="left:1853px;top:883px" width="9" height="9" viewBox="0 0 9 9"><g fill="none" stroke="#000" stroke-width="1"><path d="M2.500 2.500V.5h6v5.500H6.500"/><path d="M2 1h6.500" stroke-width="2"/><rect x=".5" y="3.500" width="5.500" height="5"/><path d="M0 4h6.500" stroke-width="2"/></g></svg>
<svg style="left:1869px;top:884px" width="8" height="7" viewBox="0 0 8 7"><path d="M.5 .3l7 6.400M7.500 .3l-7 6.400" stroke="#000" stroke-width="1.700"/></svg>
<div class="t" style="left:52px;top:912px;letter-spacing:-0.290px">[11:07:30] [LoD][pass 2] Level 9: 43754 cells (+29879)</div>
<div class="t" style="left:52px;top:929px;letter-spacing:-0.300px">[11:07:30] [LoD][pass 2] Level 10: 97494 cells (+79041)</div>
<div class="t" style="left:52px;top:946px;letter-spacing:-0.080px">[11:07:30] [LoD] Acceleration structure ready for cloud '0935' (max level: 12 / mem. = 10.62 Mb / duration: 0.8 s.)</div>
<div class="t" style="left:52px;top:963px;letter-spacing:0.015px">[11:07:31] Too few ground points! Must do filtering before this step!</div>
<div class="t" style="left:52px;top:980px;letter-spacing:0.015px">[11:07:41] Too few ground points! Must do filtering before this step!</div>
<div class="a" style="left:1854px;top:910px;width:17px;height:91px;background:#555"></div>
<div class="a" style="left:1854px;top:996px;width:17px;height:5px;background:#696969"></div>
<!-- dialog -->
<div class="a" style="left:483px;top:158px;width:1009px;height:688px;border-radius:8px;background:#333;overflow:hidden;box-shadow:0 0 0 1px rgba(0,0,0,.6)">
<div class="a" style="left:0;top:0;width:1009px;height:30px;background:#eef3f9"></div>
</div>
<svg style="left:491.5px;top:165px" width="15.5" height="14.2" viewBox="0 0 16 15" preserveAspectRatio="none"><clipPath id="appc3"><ellipse cx="8" cy="7.500" rx="8" ry="7.400"/></clipPath><g clip-path="url(#appc3)"><rect width="16" height="15" fill="#efd718"/><path d="M4.300 0C4.500 3 5.500 4.400 7.500 4S10 2.700 12 3.100S14.500 4.200 16 3.600V0z" fill="#2ba6e6"/><path d="M0 8.600C2 6.600 4.500 6.600 7 8.300S11.500 9.400 13 8.400S15 7.100 16 7.100V15H0z" fill="#1ba63a"/><circle cx="11" cy="6.100" r="3.200" fill="#e4cc20"/><circle cx="11" cy="6.100" r="2.500" fill="#0a48ae"/></g></svg>
<div class="t" style="left:513px;top:166px;color:#000;letter-spacing:-0.150px">Open Ascii File</div>
<svg style="left:1418px;top:166px" width="60" height="14" viewBox="0 0 60 14"><path d="M45 1.500l10 10M55 1.500l-10 10" stroke="#111" stroke-width="1.100" fill="none"/></svg>
<div class="a" style="left:1419px;top:165px;font-size:12px;line-height:14px;color:#000;font-weight:400">?</div>
<div class="d" style="left:493px;top:208px;letter-spacing:-0.100px">Filename:</div>
<div class="a" style="left:546px;top:199px;width:934px;height:27px;border:2px solid #f0f0f0;background:#555;border-radius:1px"></div>
<div class="d" style="left:553px;top:207.500px">D:/YS/TCC/GCP.txt</div>
<div class="d" style="left:493px;top:234px;letter-spacing:-0.020px">Here are the first lines of this file. Choose an attribute for each column (one cloud at a time):</div>
<div class="d" style="left:493px;top:253px;color:#8c8c8c;letter-spacing:-0.150px">Header: 6</div>
<div class="d" style="left:590px;top:253px;color:#8c8c8c;letter-spacing:-0.150px">3372049.631</div>
<div class="d" style="left:686px;top:253px;color:#8c8c8c;letter-spacing:-0.150px">537422.348</div>
<div class="d" style="left:782.5px;top:253px;color:#8c8c8c;letter-spacing:-0.150px">19.09</div>
<div class="a" style="left:494px;top:271px;width:986px;height:474px;border:1px solid #9599a0"></div>
<div class="a" style="left:495px;top:272px;width:532px;height:25px;background:#323232;border-bottom:1px solid #0a0a0a"></div>
<div class="a" style="left:627px;top:272px;width:1px;height:24px;background:#0a0a0a"></div>
<div class="d" style="left:495px;top:279px;width:132px;text-align:center">1</div>
<div class="a" style="left:760px;top:272px;width:1px;height:24px;background:#0a0a0a"></div>
<div class="d" style="left:628px;top:279px;width:132px;text-align:center">2</div>
<div class="a" style="left:893px;top:272px;width:1px;height:24px;background:#0a0a0a"></div>
<div class="d" style="left:761px;top:279px;width:132px;text-align:center">3</div>
<div class="a" style="left:1026px;top:272px;width:1px;height:24px;background:#0a0a0a"></div>
<div class="d" style="left:894px;top:279px;width:132px;text-align:center">4</div>
<div class="a" style="left:495px;top:356px;width:531px;height:1px;background:#2b2b2b"></div>
<div class="a" style="left:495px;top:386px;width:531px;height:1px;background:#2b2b2b"></div>
<div class="a" style="left:495px;top:416px;width:531px;height:1px;background:#2b2b2b"></div>
<div class="a" style="left:495px;top:446px;width:531px;height:1px;background:#2b2b2b"></div>
<div class="a" style="left:495px;top:476px;width:531px;height:1px;background:#2b2b2b"></div>
<div class="a" style="left:495px;top:506px;width:531px;height:1px;background:#2b2b2b"></div>
<div class="a" style="left:495px;top:536px;width:531px;height:1px;background:#2b2b2b"></div>
<div class="a" style="left:495px;top:566px;width:531px;height:1px;background:#2b2b2b"></div>
<div class="a" style="left:495px;top:596px;width:531px;height:1px;background:#2b2b2b"></div>
<div class="a" style="left:495px;top:626px;width:531px;height:1px;background:#2b2b2b"></div>
<div class="a" style="left:495px;top:656px;width:531px;height:1px;background:#2b2b2b"></div>
<div class="a" style="left:495px;top:686px;width:531px;height:1px;background:#2b2b2b"></div>
<div class="a" style="left:495px;top:716px;width:531px;height:1px;background:#2b2b2b"></div>
<div class="a" style="left:627px;top:297px;width:1px;height:447px;background:#2b2b2b"></div>
<div class="a" style="left:760px;top:297px;width:1px;height:447px;background:#2b2b2b"></div>
<div class="a" style="left:893px;top:297px;width:1px;height:447px;background:#2b2b2b"></div>
<div class="a" style="left:1026px;top:297px;width:1px;height:447px;background:#2b2b2b"></div>
<div class="a" style="left:495px;top:297px;width:132px;height:29px;border:1px solid #606060;border-right-color:#787878;border-bottom-color:#787878;box-shadow:inset 0 0 0 1px #3c3c3c"></div>
<div class="a" style="left:628px;top:297px;width:132px;height:29px;border:1px solid #606060;border-right-color:#787878;border-bottom-color:#787878;box-shadow:inset 0 0 0 1px #3c3c3c"></div>
<div class="a" style="left:761px;top:297px;width:132px;height:29px;border:1px solid #606060;border-right-color:#787878;border-bottom-color:#787878;box-shadow:inset 0 0 0 1px #3c3c3c"></div>
<div class="a" style="left:894px;top:297px;width:132px;height:29px;border:1px solid #606060;border-right-color:#787878;border-bottom-color:#787878;box-shadow:inset 0 0 0 1px #3c3c3c"></div>
<div class="a" style="left:498px;top:300px;width:110px;height:23px;background:#696969"></div>
<div class="a" style="left:500px;top:303px;width:16px;height:16px;background:#fff"></div>
<div class="a" style="left:500px;top:302.500px;width:16px;text-align:center;font-family:'Liberation Serif',serif;font-weight:700;font-size:9.500px;line-height:10px;color:#000;letter-spacing:-0.200px">SF</div>
<div class="a" style="left:501px;top:313px;width:14px;height:3px;background:linear-gradient(90deg,#00c8ff,#00e060 30%,#f0e000 55%,#ff3030 80%,#ff00c0)"></div>
<div class="a" style="left:501px;top:317px;width:14px;height:1px;background:repeating-linear-gradient(90deg,#555 0 2px,#fff 2px 4px)"></div>
<div class="d" style="left:518px;top:306px;letter-spacing:-0.200px">Scalar</div>
<svg style="left:633px;top:303.500px" width="18" height="16" viewBox="0 0 18 16"><path d="M2.500 1v14M0 13.500h15" stroke="#0a0a0a" stroke-width="1.200"/><path d="M1 3h3M1 6h3M1 9h3M5 12v3M8 12v3M11 12v3" stroke="#111" stroke-width=".6"/><path d="M2.500 0l1.300 2h-2.600zM16 13.500l-2-1.300v2.600z" fill="#111"/></svg>
<div class="a" style="left:637.8px;top:300.500px;width:12px;text-align:center;font-family:'Liberation Serif',serif;font-weight:400;font-size:16.500px;line-height:16px;color:#1010ff;-webkit-text-stroke:0.350px #1010ff">Y</div>
<div class="d" style="left:651.5px;top:306px;letter-spacing:-0.100px">coord. Y</div>
<svg style="left:766px;top:303.500px" width="18" height="16" viewBox="0 0 18 16"><path d="M2.500 1v14M0 13.500h15" stroke="#0a0a0a" stroke-width="1.200"/><path d="M1 3h3M1 6h3M1 9h3M5 12v3M8 12v3M11 12v3" stroke="#111" stroke-width=".6"/><path d="M2.500 0l1.300 2h-2.600zM16 13.500l-2-1.300v2.600z" fill="#111"/></svg>
<div class="a" style="left:770.8px;top:300.500px;width:12px;text-align:center;font-family:'Liberation Serif',serif;font-weight:400;font-size:16.500px;line-height:16px;color:#1010ff;-webkit-text-stroke:0.350px #1010ff">X</div>
<div class="d" style="left:784.5px;top:306px;letter-spacing:-0.100px">coord. X</div>
<svg style="left:899px;top:303.500px" width="18" height="16" viewBox="0 0 18 16"><path d="M2.500 1v14M0 13.500h15" stroke="#0a0a0a" stroke-width="1.200"/><path d="M1 3h3M1 6h3M1 9h3M5 12v3M8 12v3M11 12v3" stroke="#111" stroke-width=".6"/><path d="M2.500 0l1.300 2h-2.600zM16 13.500l-2-1.300v2.600z" fill="#111"/></svg>
<div class="a" style="left:903.8px;top:300.500px;width:12px;text-align:center;font-family:'Liberation Serif',serif;font-weight:400;font-size:16.500px;line-height:16px;color:#1010ff;-webkit-text-stroke:0.350px #1010ff">Z</div>
<div class="d" style="left:917.5px;top:306px;letter-spacing:-0.100px">coord. Z</div>
<div class="d" style="left:498.5px;top:336px;letter-spacing:-0.120px">7</div>
<div class="d" style="left:631.5px;top:336px;letter-spacing:-0.120px">3372045.494</div>
<div class="d" style="left:764.5px;top:336px;letter-spacing:-0.120px">537421.278</div>
<div class="d" style="left:897.5px;top:336px;letter-spacing:-0.120px">19.168</div>
<div class="d" style="left:498.5px;top:366px;letter-spacing:-0.120px">8</div>
<div class="d" style="left:631.5px;top:366px;letter-spacing:-0.120px">3372036.5</div>
<div class="d" style="left:764.5px;top:366px;letter-spacing:-0.120px">537418.92</div>
<div class="d" style="left:897.5px;top:366px;letter-spacing:-0.120px">19.34</div>
<div class="d" style="left:498.5px;top:396px;letter-spacing:-0.120px">9</div>
<div class="d" style="left:631.5px;top:396px;letter-spacing:-0.120px">3372029.913</div>
<div class="d" style="left:764.5px;top:396px;letter-spacing:-0.120px">537417.202</div>
<div class="d" style="left:897.5px;top:396px;letter-spacing:-0.120px">19.496</div>
<div class="d" style="left:498.5px;top:426px;letter-spacing:-0.120px">10</div>
<div class="d" style="left:631.5px;top:426px;letter-spacing:-0.120px">3372025.966</div>
<div class="d" style="left:764.5px;top:426px;letter-spacing:-0.120px">537403.088</div>
<div class="d" style="left:897.5px;top:426px;letter-spacing:-0.120px">19.626</div>
<div class="d" style="left:498.5px;top:456px;letter-spacing:-0.120px">11</div>
<div class="d" style="left:631.5px;top:456px;letter-spacing:-0.120px">3372037.55</div>
<div class="d" style="left:764.5px;top:456px;letter-spacing:-0.120px">537406.148</div>
<div class="d" style="left:897.5px;top:456px;letter-spacing:-0.120px">19.363</div>
<div class="d" style="left:498.5px;top:486px;letter-spacing:-0.120px">12</div>
<div class="d" style="left:631.5px;top:486px;letter-spacing:-0.120px">3372049.153</div>
<div class="d" style="left:764.5px;top:486px;letter-spacing:-0.120px">537409.195</div>
<div class="d" style="left:897.5px;top:486px;letter-spacing:-0.120px">19.109</div>
<div class="d" style="left:498.5px;top:516px;letter-spacing:-0.120px">13</div>
<div class="d" style="left:631.5px;top:516px;letter-spacing:-0.120px">3372060.76</div>
<div class="d" style="left:764.5px;top:516px;letter-spacing:-0.120px">537412.236</div>
<div class="d" style="left:897.5px;top:516px;letter-spacing:-0.120px">18.91</div>
<div class="d" style="left:498.5px;top:546px;letter-spacing:-0.120px">14</div>
<div class="d" style="left:631.5px;top:546px;letter-spacing:-0.120px">3372072.396</div>
<div class="d" style="left:764.5px;top:546px;letter-spacing:-0.120px">537415.28</div>
<div class="d" style="left:897.5px;top:546px;letter-spacing:-0.120px">18.715</div>
<div class="d" style="left:498.5px;top:576px;letter-spacing:-0.120px">15</div>
<div class="d" style="left:631.5px;top:576px;letter-spacing:-0.120px">3372083.308</div>
<div class="d" style="left:764.5px;top:576px;letter-spacing:-0.120px">537418.136</div>
<div class="d" style="left:897.5px;top:576px;letter-spacing:-0.120px">18.517</div>
<div class="a" style="left:1462px;top:272px;width:17px;height:472px;background:#555"></div>
<div class="a" style="left:1462px;top:272px;width:17px;height:440px;background:#696969"></div>
<div class="d" style="left:493px;top:760px;letter-spacing:-0.100px">Separator</div>
<div class="a" style="left:548px;top:751px;width:30px;height:28px;border:2px solid #f0f0f0;background:#555;border-radius:1px"></div>
<div class="d" style="left:584px;top:760px;letter-spacing:-0.050px">(ASCII code: 9)</div>
<div class="a" style="left:665px;top:754px;width:34px;height:22px;background:#333;border-top:1px solid #3f3f3f;border-left:1px solid #3f3f3f;border-right:1px solid #1c1c1c;border-bottom:1px solid #1c1c1c;box-shadow:1px 1px 0 #262626"></div>
<div class="d" style="left:665px;top:759.500px;width:34px;text-align:center;font-size:10.500px;letter-spacing:-0.700px;text-indent:-0.700px">ESP</div>
<div class="a" style="left:705px;top:754px;width:35px;height:22px;background:#333;border-top:1px solid #3f3f3f;border-left:1px solid #3f3f3f;border-right:1px solid #1c1c1c;border-bottom:1px solid #1c1c1c;box-shadow:1px 1px 0 #262626"></div>
<div class="d" style="left:705px;top:759.500px;width:35px;text-align:center;font-size:10.500px;letter-spacing:-0.700px;text-indent:-0.700px">TAB</div>
<div class="a" style="left:746px;top:754px;width:20px;height:22px;background:#333;border-top:1px solid #3f3f3f;border-left:1px solid #3f3f3f;border-right:1px solid #1c1c1c;border-bottom:1px solid #1c1c1c;box-shadow:1px 1px 0 #262626"></div>
<div class="d" style="left:746px;top:759.500px;width:20px;text-align:center;font-size:10.500px;letter-spacing:-0.700px;text-indent:-0.700px">,</div>
<div class="a" style="left:772px;top:754px;width:20px;height:22px;background:#333;border-top:1px solid #3f3f3f;border-left:1px solid #3f3f3f;border-right:1px solid #1c1c1c;border-bottom:1px solid #1c1c1c;box-shadow:1px 1px 0 #262626"></div>
<div class="d" style="left:772px;top:759.500px;width:20px;text-align:center;font-size:10.500px;letter-spacing:-0.700px;text-indent:-0.700px">;</div>
<div class="d" style="left:493px;top:790px;letter-spacing:-0.420px">Skip lines</div>
<div class="a" style="left:543px;top:786px;width:41px;height:18px;border:1px solid #e8e8e8;background:#333"></div>
<div class="d" style="left:547px;top:789.500px">1</div>
<div class="a" style="left:567px;top:787px;width:16px;height:16px;background:#f0f0f0"></div>
<svg style="left:567px;top:787px" width="16" height="16" viewBox="0 0 16 16"><path d="M5.500 6.300h5L8 3.500zM5.500 9.700h5L8 12.500z" fill="#111"/><path d="M0 8h16" stroke="#d8d8d8" stroke-width="1"/></svg>
<div class="cb" style="left:610px;top:788px"><svg width="13" height="13" viewBox="0 0 13 13"><path d="M3.200 6.800l2.200 2.200l4.500-4.800" fill="none" stroke="#e6eefb" stroke-width="1"/></svg></div>
<div class="d" style="left:627.500px;top:789px;letter-spacing:-0.020px">extract scalar field names from first line</div>
<div class="d" style="left:493px;top:817px;letter-spacing:-0.100px">Max number of points per cloud</div>
<div class="a" style="left:651px;top:813px;width:94px;height:18px;border:1px solid #e8e8e8;background:#333"></div>
<div class="d" style="left:654px;top:816.500px;letter-spacing:-0.270px">2000.00 Million</div>
<div class="a" style="left:728px;top:814px;width:16px;height:16px;background:#f0f0f0"></div>
<svg style="left:728px;top:814px" width="16" height="16" viewBox="0 0 16 16"><path d="M5.500 6.300h5L8 3.500zM5.500 9.700h5L8 12.500z" fill="#111"/><path d="M0 8h16" stroke="#d8d8d8" stroke-width="1"/></svg>
<div class="cbw" style="left:1374.500px;top:758.500px"></div>
<div class="d" style="left:1391.500px;top:759px;letter-spacing:-0.320px">Show labels in 2D</div>
<div class="a" style="left:1309px;top:811px;width:47px;height:23px;background:#696969"></div>
<div class="d" style="left:1309px;top:816.500px;width:47px;text-align:center;letter-spacing:-0.150px">Apply</div>
<div class="a" style="left:1362px;top:811px;width:60px;height:23px;background:#696969"></div>
<div class="d" style="left:1362px;top:816.500px;width:60px;text-align:center;letter-spacing:-0.150px">Apply all</div>
<div class="a" style="left:1428px;top:811px;width:52px;height:23px;background:#696969"></div>
<div class="d" style="left:1428px;top:816.500px;width:52px;text-align:center;letter-spacing:-0.150px">Cancel</div>
</body></html>
